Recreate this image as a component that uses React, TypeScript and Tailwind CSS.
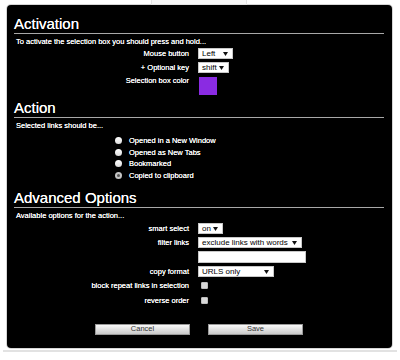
import type { ReactNode } from "react";

function Arrow() {
  return (
    <svg width="5" height="4" viewBox="0 0 5 4" className="shrink-0">
      <polygon points="0,0 5,0 2.5,4" fill="#111" />
    </svg>
  );
}

function FakeSelect({ value, width }: { value: string; width: string }) {
  return (
    <div
      className={`${width} h-[11px] bg-white border border-[#c8c8c8] flex items-center justify-between pl-[3px] pr-[4px] text-[8px] leading-none text-black [text-shadow:none]`}
    >
      <span>{value}</span>
      <Arrow />
    </div>
  );
}

function Heading({ children, className = "" }: { children: ReactNode; className?: string }) {
  return (
    <h2
      className={`text-[15px] leading-[15px] text-white pb-[2px] border-b border-[#a8a8a8] ${className}`}
    >
      {children}
    </h2>
  );
}

function Note({ children }: { children: ReactNode }) {
  return <p className="mt-[3px] pl-[2px] text-[7.5px] leading-[10px] text-white">{children}</p>;
}

function Row({
  label,
  children,
  className = "",
  gap = "ml-[9px]",
}: {
  label: string;
  children: ReactNode;
  className?: string;
  gap?: string;
}) {
  return (
    <div className={`flex items-center ${className}`}>
      <span className="w-[175px] text-right text-[7.5px] leading-[11px] text-white">{label}</span>
      <div className={gap}>{children}</div>
    </div>
  );
}

function Radio({ label, checked = false }: { label: string; checked?: boolean }) {
  return (
    <div className="h-[11.5px] flex items-center">
      <span
        className={`w-[7px] h-[7px] rounded-full flex items-center justify-center ${
          checked ? "bg-[#c4c4c4]" : "bg-gradient-to-b from-white to-[#dcdcdc]"
        }`}
      >
        {checked && <span className="w-[3px] h-[3px] rounded-full bg-[#555]" />}
      </span>
      <span className="ml-[7px] text-[7.5px] leading-[11px] text-white">{label}</span>
    </div>
  );
}

function Checkbox() {
  return <div className="w-[7px] h-[7px] bg-[#d8d8d8] border border-[#bdbdbd] rounded-[1px]" />;
}

function Button({ children }: { children: ReactNode }) {
  return (
    <button
      type="button"
      className="w-[95px] h-[11px] border border-[#9a9a9a] bg-gradient-to-b from-[#fafafa] to-[#c9c9c9] text-[7.5px] leading-none text-[#333] [text-shadow:none]"
    >
      {children}
    </button>
  );
}

export default function App() {
  return (
    <div className="w-[400px] h-[360px] bg-white font-['Liberation_Sans',Arial,sans-serif] overflow-hidden">
      <div className="relative">
        <div className="absolute left-[151px] top-0 w-[96px] h-[5px] border-x border-b border-[#e4e4e4] bg-[#f8f8f8]" />
      </div>
      <div className="pt-[5px] pl-[7px]">
        <div className="w-[385px] h-[343px] bg-black rounded-[4px] pt-[11px] pl-[7px] pr-[8px] shadow-[0_0_0_1px_#d6d6d6] [text-shadow:0_0_0.5px_#ffffff]">
          <Heading>Activation</Heading>
          <Note>To activate the selection box you should press and hold...</Note>
          <Row label="Mouse button" className="mt-[1px]">
            <FakeSelect value="Left" width="w-[35px]" />
          </Row>
          <Row label="+ Optional key" className="mt-[3px]">
            <FakeSelect value="shift" width="w-[31px]" />
          </Row>
          <div className="flex items-start mt-[4px]">
            <span className="w-[175px] text-right text-[7.5px] leading-[8px] text-white">
              Selection box color
            </span>
            <div className="ml-[10px] w-[18px] h-[18px] bg-[#8a2be2]" />
          </div>

          <Heading className="mt-[5px]">Action</Heading>
          <Note>Selected links should be...</Note>
          <div className="mt-[4px] ml-[101px]">
            <Radio label="Opened in a New Window" />
            <Radio label="Opened as New Tabs" />
            <Radio label="Bookmarked" />
            <Radio label="Copied to clipboard" checked />
          </div>

          <Heading className="mt-[9px]">Advanced Options</Heading>
          <Note>Available options for the action...</Note>
          <Row label="smart select" className="mt-[2px]">
            <FakeSelect value="on" width="w-[25px]" />
          </Row>
          <Row label="filter links" className="mt-[3px]">
            <FakeSelect value="exclude links with words" width="w-[104px]" />
          </Row>
          <div className="mt-[3px] ml-[184px] w-[108px] h-[12px] bg-white border border-[#c8c8c8]" />
          <Row label="copy format" className="mt-[3px]">
            <FakeSelect value="URLS only" width="w-[76px]" />
          </Row>
          <Row label="block repeat links in selection" className="mt-[3px]" gap="ml-[12px]">
            <Checkbox />
          </Row>
          <Row label="reverse order" className="mt-[3.5px]" gap="ml-[12px]">
            <Checkbox />
          </Row>

          <div className="mt-[18px] flex ml-[81px] gap-[18px]">
            <Button>Cancel</Button>
            <Button>Save</Button>
          </div>
        </div>
      </div>
      <div className="mt-[2px] mx-[3px] h-[2px] bg-[#e2e2e2]" />
    </div>
  );
}
